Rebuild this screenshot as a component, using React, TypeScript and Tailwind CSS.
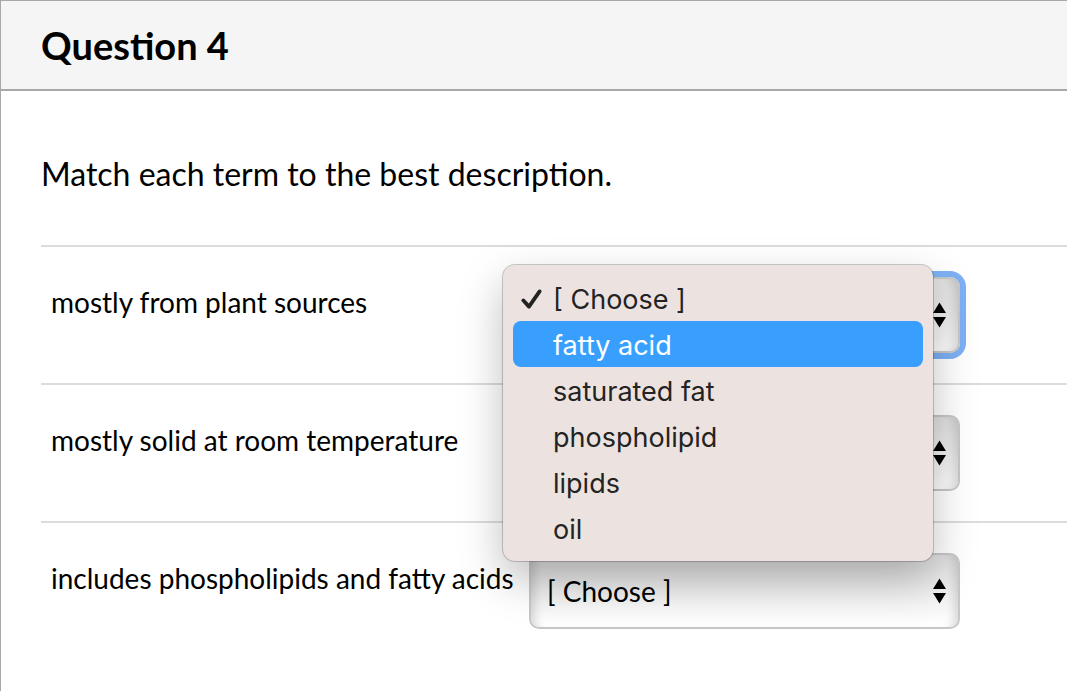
import { useState } from "react";

const CHOICES = ["[ Choose ]", "fatty acid", "saturated fat", "phospholipid", "lipids", "oil"];

const TERMS = [
  { id: "plant-sources", label: "mostly from plant sources" },
  { id: "room-temperature", label: "mostly solid at room temperature" },
  { id: "includes", label: "includes phospholipids and fatty acids" },
];

interface ChoiceMenuProps {
  selected: string;
  onSelect: (choice: string) => void;
}

function ChoiceMenu({ selected, onSelect }: ChoiceMenuProps) {
  const [active, setActive] = useState("fatty acid");

  return (
    <div
      role="listbox"
      aria-label="Choices"
      className="absolute -top-3 -left-[26px] z-10 flex w-[430px] flex-col rounded-xl bg-[#ece3e0] p-2.5 font-['Inter',sans-serif] shadow-[0_0_0_1px_rgba(0,0,0,0.2),0_18px_44px_rgba(0,0,0,0.26)]"
    >
      {CHOICES.map((choice) => (
        <button
          key={choice}
          type="button"
          role="option"
          aria-selected={choice === selected}
          onMouseEnter={() => setActive(choice)}
          onClick={() => onSelect(choice)}
          className={[
            "flex h-[46px] items-center rounded-lg pt-1 pl-2 text-left text-[27px] whitespace-pre",
            choice === active ? "bg-[#389fff] text-white" : "text-[#242323]",
          ].join(" ")}
        >
          <span className="w-8 shrink-0">
            {choice === selected && (
              <svg width="22" height="22" viewBox="0 0 22 22" fill="none" stroke="currentColor" strokeWidth="3.8" strokeLinecap="round" strokeLinejoin="round">
                <path d="M2.4 11.5 L8 17.6 L18.6 2.4" />
              </svg>
            )}
          </span>
          {choice}
        </button>
      ))}
    </div>
  );
}

interface MatchRowProps {
  id: string;
  label: string;
  defaultOpen?: boolean;
}

function MatchRow({ id, label, defaultOpen = false }: MatchRowProps) {
  const [value, setValue] = useState(CHOICES[0]);
  const [open, setOpen] = useState(defaultOpen);

  return (
    <div className="flex items-start border-t-2 border-[#dcdcdc] py-[30px] pl-2.5">
      <label htmlFor={id} className="w-[478px] shrink-0 pt-2 text-[28px] leading-[34px] whitespace-nowrap">
        {label}
      </label>
      <div className="relative w-[431px] shrink-0">
        <select
          id={id}
          value={value}
          onChange={(e) => setValue(e.target.value)}
          className={[
            "block h-[76px] w-full appearance-none rounded-[10px] border-2 border-[#c7c7c7] bg-linear-to-b from-[#e0e0e0] to-white pl-4 text-[28px] text-black outline-none",
            open
              ? "shadow-[0_0_0_6px_#7db1f5,inset_12px_0_10px_-8px_rgba(0,0,0,0.14),inset_-12px_0_10px_-8px_rgba(0,0,0,0.14)]"
              : "shadow-[inset_12px_0_10px_-8px_rgba(0,0,0,0.14),inset_-12px_0_10px_-8px_rgba(0,0,0,0.14)]",
          ].join(" ")}
        >
          {CHOICES.map((choice) => (
            <option key={choice}>{choice}</option>
          ))}
        </select>
        <svg className="pointer-events-none absolute top-[25px] right-3.5" width="13" height="26" viewBox="0 0 13 26">
          <path d="M6.5 0.5 L13 11 H0 Z" />
          <path d="M0 15 H13 L6.5 25.5 Z" />
        </svg>
        {open && (
          <ChoiceMenu
            selected={value}
            onSelect={(choice) => {
              setValue(choice);
              setOpen(false);
            }}
          />
        )}
      </div>
    </div>
  );
}

export default function App() {
  return (
    <main className="min-h-screen overflow-hidden border-t border-l border-[#a8a8a8] bg-white font-['Lato',sans-serif] text-black">
      <header className="border-b-2 border-[#a8a8a8] bg-[#f5f5f5] px-10 py-5">
        <h1 className="text-[38px] leading-12 font-bold">Question 4</h1>
      </header>
      <section className="pt-[61px] pl-10">
        <p className="pb-[49px] text-[32px] leading-11">Match each term to the best description.</p>
        {TERMS.map((term, i) => (
          <MatchRow key={term.id} id={term.id} label={term.label} defaultOpen={i === 0} />
        ))}
      </section>
    </main>
  );
}
